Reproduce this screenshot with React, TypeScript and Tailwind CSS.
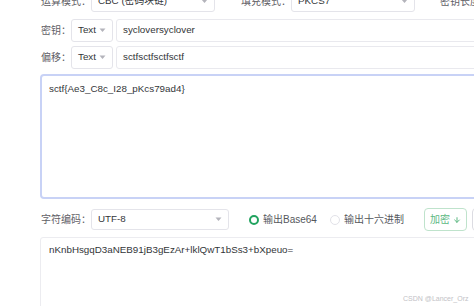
import { ArrowDown } from "lucide-react";

const font = "font-['Liberation_Sans','Noto_Sans_CJK_SC',sans-serif]";

function Caret() {
  return (
    <svg width="7" height="5" viewBox="0 0 7 5" className="shrink-0">
      <path d="M0.5 0.5 L3.5 4 L6.5 0.5 Z" fill="#b4b4bb" />
    </svg>
  );
}

function Select({ value, className }: { value: string; className: string }) {
  return (
    <div
      className={`flex h-full shrink-0 items-center justify-between whitespace-nowrap rounded-[3px] border border-[#e4e4ea] bg-white pl-[6px] pr-[6px] text-[#333639] ${className}`}
    >
      <span>{value}</span>
      <Caret />
    </div>
  );
}

function Label({ text, className = "" }: { text: string; className?: string }) {
  return (
    <span className={`shrink-0 whitespace-nowrap text-[10px] text-[#5f6066] ${className}`}>
      {text}
    </span>
  );
}

function Radio({ checked, label }: { checked: boolean; label: string }) {
  return (
    <div className="flex shrink-0 items-center whitespace-nowrap">
      <span
        className={`h-[10px] w-[10px] rounded-full ${
          checked ? "border-[2.5px] border-[#21a35f]" : "border border-[#e2e2e8]"
        }`}
      />
      <span className="ml-[4px] text-[10px] text-[#55575c]">{label}</span>
    </div>
  );
}

export default function App() {
  return (
    <div
      className={`relative h-[306px] w-[474px] overflow-hidden bg-white text-[9.8px] ${font}`}
    >
      <div className="w-[560px] pl-[40px]">
        {/* mode row */}
        <div className="-mt-[10px] flex h-[22px] items-center">
          <Label text="运算模式：" className="ml-[1px]" />
          <Select value="CBC (密码块链)" className="w-[124px]" />
          <Label text="填充模式：" className="ml-[26px]" />
          <Select value="PKCS7" className="w-[124px]" />
          <Label text="密钥长度" className="ml-[25px]" />
        </div>

        {/* key row */}
        <div className="mt-[7px] flex h-[23px] items-center">
          <Label text="密钥：" className="ml-[1px]" />
          <Select value="Text" className="w-[42px]" />
          <div className="ml-[3px] flex h-full flex-1 items-center rounded-[3px] border border-[#e9e9ee] pl-[6px] text-[#333639]">
            sycloversyclover
          </div>
        </div>

        {/* iv row */}
        <div className="mt-[4px] flex h-[23px] items-center">
          <Label text="偏移：" className="ml-[1px]" />
          <Select value="Text" className="w-[42px]" />
          <div className="ml-[3px] flex h-full flex-1 items-center rounded-[3px] border border-[#e9e9ee] pl-[6px] text-[#333639]">
            sctfsctfsctfsctf
          </div>
        </div>

        {/* input text */}
        <div className="mt-[5px] h-[125px] rounded-[4px] border-2 border-[#c8d2f6] px-[7px] pt-[6px] text-[#333639]">
          sctf{"{"}Ae3_C8c_I28_pKcs79ad4{"}"}
        </div>

        {/* encoding row */}
        <div className="mt-[10px] flex h-[21px] items-center">
          <Label text="字符编码：" className="ml-[1px]" />
          <Select value="UTF-8" className="w-[138px]" />
          <div className="ml-[20px] flex items-center gap-[13px]">
            <Radio checked label="输出Base64" />
            <Radio checked={false} label="输出十六进制" />
          </div>
          <div className="ml-[20px] flex h-[23px] w-[43px] shrink-0 items-center justify-center whitespace-nowrap rounded-[4px] border border-[#bfe3cc] text-[10px] text-[#5cb882]">
            加密
            <ArrowDown size={8} strokeWidth={3} className="ml-[3px]" />
          </div>
          <div className="ml-[5px] h-[23px] w-[40px] shrink-0 rounded-[4px] border border-[#dcdce2]" />
        </div>

        {/* output */}
        <div className="mt-[7px] h-[90px] rounded-[3px] border border-[#ececf0] px-[8px] pt-[5px] text-[#333639]">
          nKnbHsgqD3aNEB91jB3gEzAr+lklQwT1bSs3+bXpeuo=
        </div>
      </div>

      <span className="absolute left-[403px] top-[294px] whitespace-nowrap text-[7px] text-[#c2c2c6]">
        CSDN @Lancer_Orz
      </span>
    </div>
  );
}
